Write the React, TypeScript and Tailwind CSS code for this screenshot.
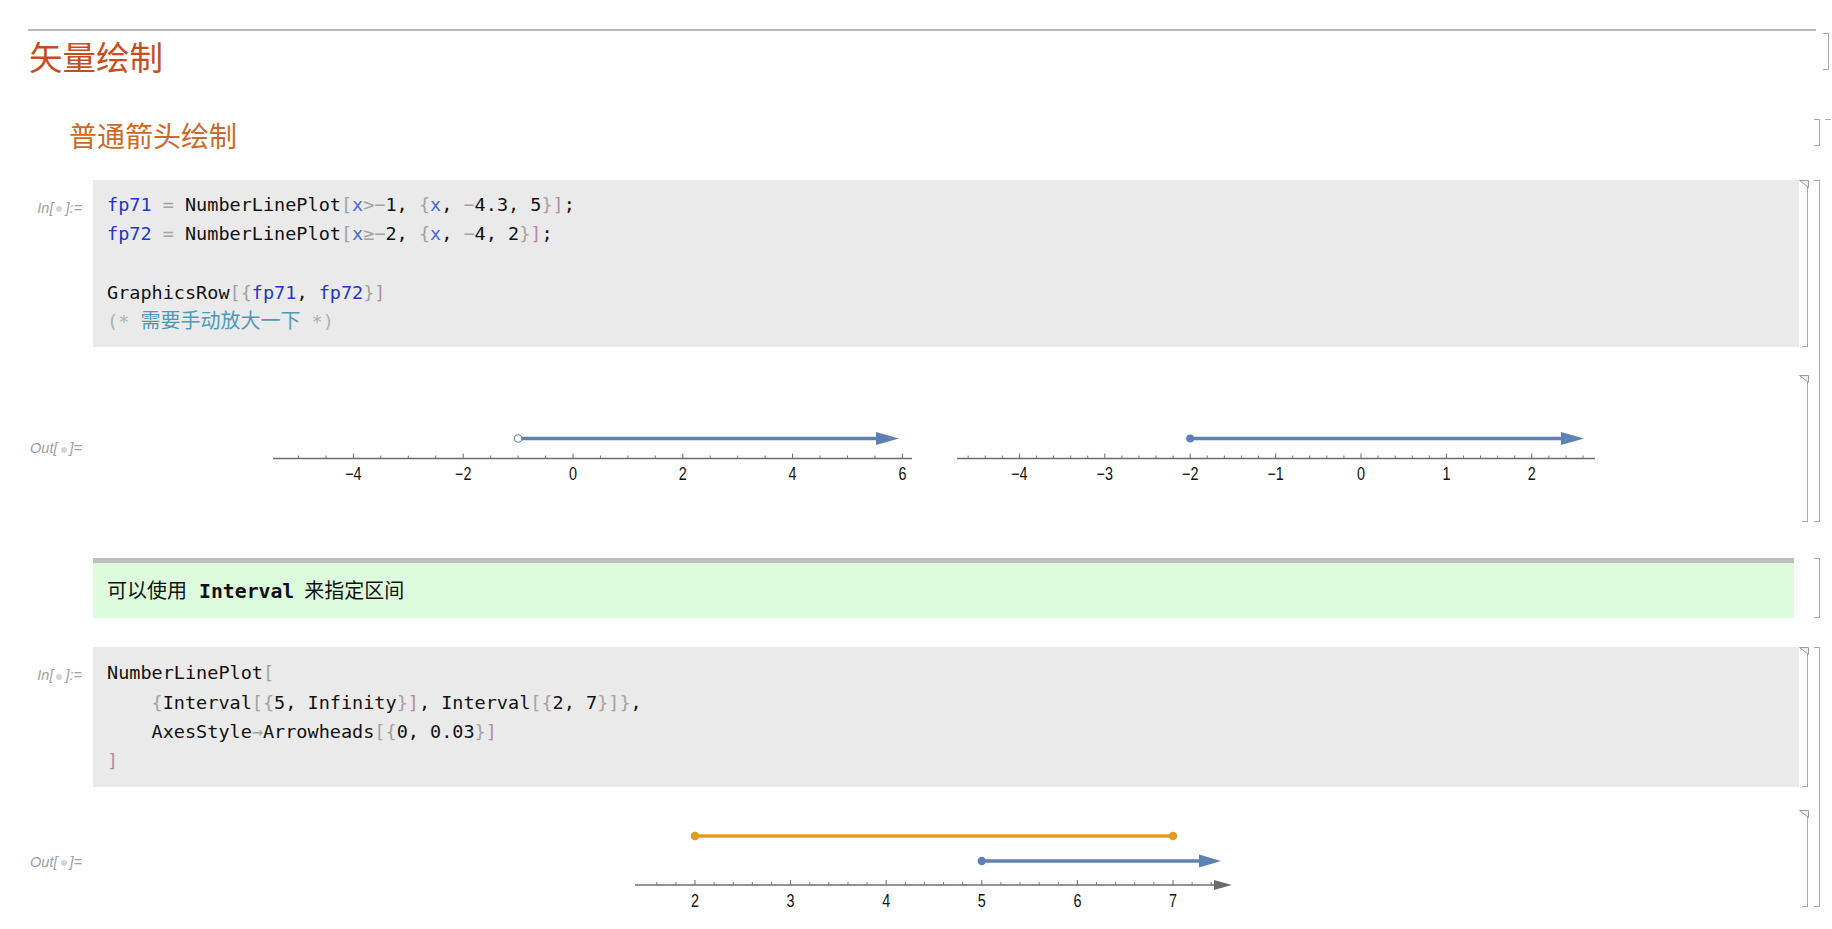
import React from 'react';

type C = { children?: React.ReactNode };

const P = ({ children }: C) => <span className="text-[#a3a3a3]">{children}</span>;
const G = ({ children }: C) => <span className="text-[#2436c4]">{children}</span>;
const X = ({ children }: C) => <span className="text-[#416ad6]">{children}</span>;
const R = ({ children }: C) => <span className="text-[#b58aa8]">{children}</span>;

const BLUE = '#5e81b5';
const ORANGE = '#e19c24';
const AXIS = '#6c6c6c';

const range = (a: number, b: number, s: number) => {
  const r: number[] = [];
  for (let i = 0; a + i * s <= b + 1e-9; i++) r.push(Math.round((a + i * s) * 1000) / 1000);
  return r;
};

function Axis({
  f,
  y,
  x1,
  x2,
  majors,
  minors,
  arrow,
}: {
  f: (v: number) => number;
  y: number;
  x1: number;
  x2: number;
  majors: number[];
  minors: number[];
  arrow?: boolean;
}) {
  const lbl = (v: number) => (v < 0 ? '\u2212' + Math.abs(v) : String(v));
  return (
    <g>
      <line x1={x1} y1={y} x2={arrow ? x2 - 14 : x2} y2={y} stroke={AXIS} strokeWidth={1.4} />
      {arrow && <polygon points={`${x2},${y} ${x2 - 18},${y - 5} ${x2 - 18},${y + 5}`} fill={AXIS} />}
      {majors.map((v) => (
        <line key={'M' + v} x1={f(v)} x2={f(v)} y1={y} y2={y - 5} stroke={AXIS} strokeWidth={1} />
      ))}
      {minors
        .filter((v) => !majors.some((m) => Math.abs(m - v) < 1e-6))
        .map((v) => (
          <line key={'m' + v} x1={f(v)} x2={f(v)} y1={y} y2={y - 3} stroke={AXIS} strokeWidth={0.9} />
        ))}
      {majors.map((v) => (
        <text
          key={'t' + v}
          transform={`translate(${f(v)} ${y + 21.5}) scale(0.8 1)`}
          textAnchor="middle"
          fontFamily="'Liberation Sans', Arial, sans-serif"
          fontSize={18}
          fill="#111"
        >
          {lbl(v)}
        </text>
      ))}
    </g>
  );
}

function Arrow({ x1, tip, y, color, len = 23, h = 6.5 }: { x1: number; tip: number; y: number; color: string; len?: number; h?: number }) {
  return (
    <g>
      <line x1={x1} y1={y} x2={tip - len + 3} y2={y} stroke={color} strokeWidth={3.6} />
      <polygon points={`${tip},${y} ${tip - len},${y - h} ${tip - len},${y + h}`} fill={color} />
    </g>
  );
}

function Plot1() {
  const fl = (v: number) => 573 + 54.9 * v;
  const fr = (v: number) => 1361 + 85.4 * v;
  return (
    <svg width={1706} height={147} className="block overflow-visible">
      <g transform="translate(-93 -374.5)">
        <Axis f={fl} y={458} x1={273} x2={912} majors={[-4, -2, 0, 2, 4, 6]} minors={range(-5, 6, 0.5)} />
        <Arrow x1={fl(-1)} tip={899} y={438} color={BLUE} />
        <circle cx={fl(-1)} cy={438} r={3.8} fill="#fff" stroke={BLUE} strokeWidth={1.1} />
        <Axis f={fr} y={458} x1={957} x2={1595} majors={[-4, -3, -2, -1, 0, 1, 2]} minors={range(-4.6, 2.6, 0.2)} />
        <Arrow x1={fr(-2)} tip={1584} y={438} color={BLUE} />
        <circle cx={fr(-2)} cy={438} r={4} fill={BLUE} />
      </g>
    </svg>
  );
}

function Plot2() {
  const f = (v: number) => 695 + 95.6 * (v - 2);
  return (
    <svg width={1706} height={97} className="block overflow-visible">
      <g transform="translate(-93 -809)">
        <Axis f={f} y={884} x1={635} x2={1232} majors={[2, 3, 4, 5, 6, 7]} minors={range(1.6, 7.4, 0.2)} arrow />
        <line x1={f(2)} y1={835} x2={f(7)} y2={835} stroke={ORANGE} strokeWidth={3.6} />
        <circle cx={f(2)} cy={835} r={4.3} fill={ORANGE} />
        <circle cx={f(7)} cy={835} r={4.3} fill={ORANGE} />
        <Arrow x1={f(5)} tip={1221} y={860} color={BLUE} len={22} h={6.5} />
        <circle cx={f(5)} cy={860} r={4.2} fill={BLUE} />
      </g>
    </svg>
  );
}

function Label({ kind, className }: { kind: 'In' | 'Out'; className: string }) {
  return (
    <div
      className={`w-[93px] shrink-0 pr-[11px] text-right italic text-[14.5px] leading-[18px] text-[#a0a0a0] font-[family-name:'Liberation_Sans',Arial,sans-serif] ${className}`}
    >
      {kind}[
      <span className="inline-block w-[6px] h-[6px] rounded-full bg-[#d6d6d6] mx-[3px] align-middle" />
      ]{kind === 'In' ? ':=' : '='}
    </div>
  );
}

function CellBracket() {
  return (
    <div className="relative shrink-0 ml-[3px] w-[6px] border-y border-r border-[#a9a9a9]">
      <svg className="absolute -top-px -left-[3px]" width="10" height="8">
        <polygon points="0.5,0.5 9.5,0.5 9.5,7.5" fill="#eeeeee" stroke="#9c9c9c" strokeWidth="1" />
      </svg>
    </div>
  );
}

function GroupBracket() {
  return <div className="shrink-0 ml-[6px] w-[6px] border-y border-r border-[#a9a9a9]" />;
}

const codeCls =
  "w-[1706px] bg-[#eaeaea] pl-[14px] text-[18.5px] leading-[29.3px] whitespace-pre text-[#111] font-[family-name:'DejaVu_Sans_Mono','Noto_Sans_CJK_SC',monospace]";

export default function App() {
  return (
    <div className="w-[1832px] h-[929px] bg-white overflow-hidden font-[family-name:'Noto_Sans_CJK_SC','Noto_Sans',sans-serif]">
      {/* Title */}
      <div className="flex pt-[29px]">
        <div className="w-[1816px] pl-[28px] shrink-0">
          <div className="h-[2px] bg-[#b9b9b9]" />
          <div className="pl-[1px] pt-[5px] text-[33.5px] leading-[40px] text-[#c64d1e]">矢量绘制</div>
        </div>
        <div className="relative ml-[7px] mt-[4px] w-[6px] h-[37px] border-y border-r border-[#a9a9a9]" />
      </div>

      {/* Section */}
      <div className="flex mt-[42px]">
        <div className="w-[1814px] shrink-0 pl-[69px] text-[28px] leading-[34px] text-[#cd6a27]">普通箭头绘制</div>
        <div className="relative mt-[1px] w-[6px] h-[27px] border-y border-r border-[#a9a9a9]">
          <div className="absolute -top-px left-[11px] w-[6px] h-px bg-[#a9a9a9]" />
        </div>
      </div>

      {/* Group 1 */}
      <div className="flex mt-[28px]">
        <div className="flex flex-col">
          <div className="flex">
            <Label kind="In" className="pt-[19px]" />
            <div className={`${codeCls} pt-[10px] pb-[11px]`}>
              <div>
                <G>fp71</G>
                <P> = </P>NumberLinePlot<P>[</P>
                <X>x</X>
                <P>{'>\u2212'}</P>1, <P>{'{'}</P>
                <X>x</X>, <P>{'\u2212'}</P>4.3, 5<P>{'}'}</P>
                <R>]</R>;
              </div>
              <div>
                <G>fp72</G>
                <P> = </P>NumberLinePlot<P>[</P>
                <X>x</X>
                <P>{'\u2265\u2212'}</P>2, <P>{'{'}</P>
                <X>x</X>, <P>{'\u2212'}</P>4, 2<P>{'}'}</P>
                <R>]</R>;
              </div>
              <div>{'\u00a0'}</div>
              <div>
                GraphicsRow<P>[{'{'}</P>
                <G>fp71</G>, <G>fp72</G>
                <P>{'}'}</P>
                <R>]</R>
              </div>
              <div>
                <span className="text-[#b0b0b0]">(* </span>
                <span className="text-[20px] text-[#4d9ab5]">需要手动放大一下</span>
                <span className="text-[#b0b0b0]"> *)</span>
              </div>
            </div>
            <CellBracket />
          </div>
          <div className="flex mt-[28px] h-[147px]">
            <Label kind="Out" className="pt-[64px]" />
            <div className="w-[1706px] shrink-0">
              <Plot1 />
            </div>
            <CellBracket />
          </div>
        </div>
        <GroupBracket />
      </div>

      {/* Text cell */}
      <div className="flex mt-[36px]">
        <div className="w-[93px] shrink-0" />
        <div className="w-[1701px] shrink-0 border-t-[5px] border-[#bebebe] bg-[#ddfcdd] pl-[14px] pt-[14px] pb-[13px] text-[20px] leading-[26px] text-[#111]">
          可以使用
          <span className="inline-block ml-[12px] mr-[10px] font-bold text-[19.8px] font-[family-name:'DejaVu_Sans_Mono',monospace]">
            Interval
          </span>
          来指定区间
        </div>
        <div className="shrink-0 ml-[20px] w-[6px] border-y border-r border-[#a9a9a9]" />
      </div>

      {/* Group 2 */}
      <div className="flex mt-[29px]">
        <div className="flex flex-col">
          <div className="flex">
            <Label kind="In" className="pt-[19px]" />
            <div className={`${codeCls} pt-[11px] pb-[11px]`}>
              <div>
                NumberLinePlot<P>[</P>
              </div>
              <div>
                {'    '}
                <P>{'{'}</P>Interval<P>[{'{'}</P>5, Infinity<P>{'}'}</P>
                <R>]</R>, Interval<P>[{'{'}</P>2, 7<P>{'}]}'}</P>,
              </div>
              <div>
                {'    '}AxesStyle<P>{'\u2192'}</P>Arrowheads<P>[{'{'}</P>0, 0.03<P>{'}'}</P>
                <R>]</R>
              </div>
              <div>
                <R>]</R>
              </div>
            </div>
            <CellBracket />
          </div>
          <div className="flex mt-[23px] h-[97px]">
            <Label kind="Out" className="pt-[43px]" />
            <div className="w-[1706px] shrink-0">
              <Plot2 />
            </div>
            <CellBracket />
          </div>
        </div>
        <GroupBracket />
      </div>
    </div>
  );
}
